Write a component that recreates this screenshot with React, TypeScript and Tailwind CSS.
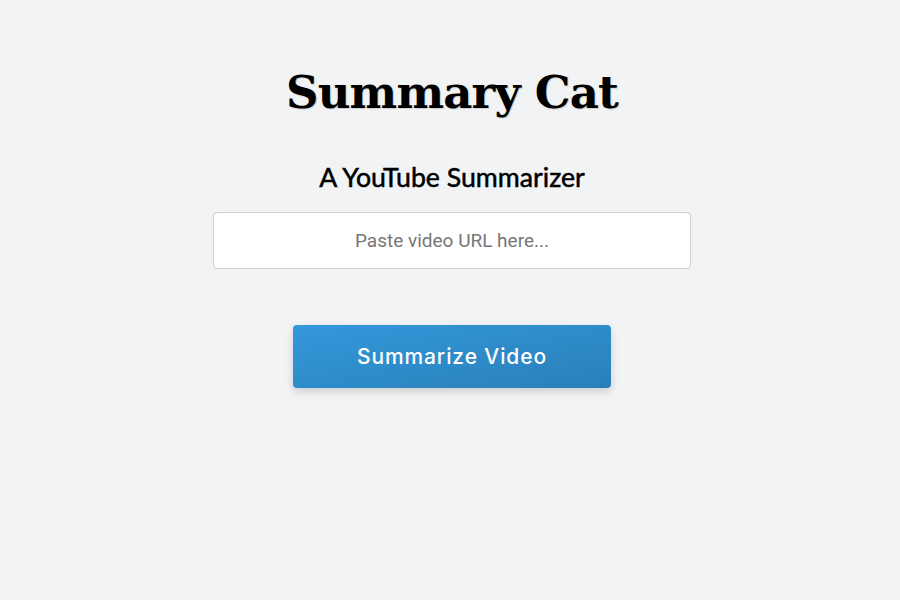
import React, { useState } from 'react';

const App: React.FC = () => {
  const [url, setUrl] = useState('');

  return (
    <div className="min-h-screen w-full bg-[#f2f3f5] flex flex-col items-center pt-[62px] pl-[4px]">
      <h1 className="font-['DejaVu_Serif',serif] font-bold text-[45px] leading-[62px] tracking-[-0.8px] text-black [text-shadow:1px_1px_1px_rgba(0,0,0,0.15)]">
        Summary Cat
      </h1>

      <h2 className="mt-[37px] font-['Lato',sans-serif] font-normal text-[26.7px] leading-[32px] text-black [-webkit-text-stroke:0.5px_black]">
        A YouTube Summarizer
      </h2>

      <input
        type="text"
        value={url}
        onChange={e => setUrl(e.target.value)}
        placeholder="Paste video URL here..."
        className="mt-[19px] w-[478px] h-[57px] bg-white border border-[#d0d0d0] rounded-[4px] text-center font-['Roboto',sans-serif] text-[19px] text-[#333] placeholder:text-[#767676] outline-none"
      />

      <button
        className="mt-[56px] w-[318px] h-[63px] rounded-[4px] bg-gradient-to-br from-[#3498db] to-[#2980b9] text-white font-['Inter',sans-serif] font-medium text-[21px] tracking-[0.9px] shadow-[0_4px_8px_rgba(0,0,0,0.15)]"
      >
        Summarize Video
      </button>
    </div>
  );
};

export default App;
